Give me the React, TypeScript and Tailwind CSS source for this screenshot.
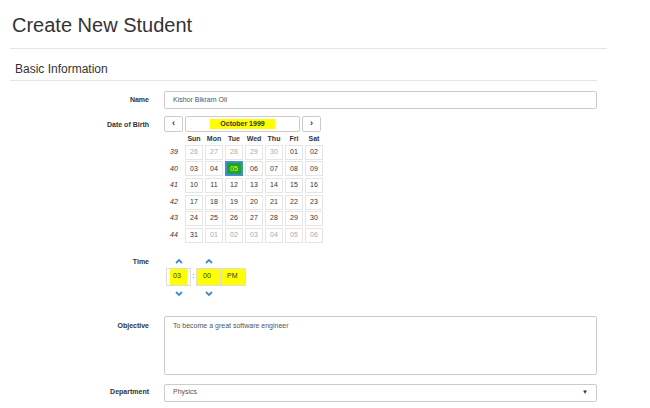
import React from "react";

const rows: [number, (string | [string, boolean])[]][] = [
  [39, ["26", "27", "28", "29", "30", "01", "02"]],
  [40, ["03", "04", "05", "06", "07", "08", "09"]],
  [41, ["10", "11", "12", "13", "14", "15", "16"]],
  [42, ["17", "18", "19", "20", "21", "22", "23"]],
  [43, ["24", "25", "26", "27", "28", "29", "30"]],
  [44, ["31", "01", "02", "03", "04", "05", "06"]],
];

function Chev({ up }: { up?: boolean }) {
  return (
    <svg width="8" height="6" viewBox="0 0 8 6">
      <path d={up ? "M1 5 L4 2 L7 5" : "M1 1 L4 4 L7 1"} stroke="#428bca" strokeWidth="1.8" fill="none" />
    </svg>
  );
}

export default function App() {
  return (
    <div className="w-[650px] h-[408px] bg-white overflow-hidden text-[#333]" style={{ fontFamily: '"Liberation Sans", Arial, sans-serif' }}>
      <div className="pl-[12px] pt-[13px] text-[20px] leading-[24px]">Create New Student</div>
      <div className="ml-[10px] w-[597px] mt-[11px] border-t border-[#e5e5e5]" />
      <div className="pl-[15px] mt-[13px] text-[12px] leading-[14px]">Basic Information</div>
      <div className="ml-[10px] w-[587px] mt-[4px] border-t border-[#e5e5e5]" />
      <div className="text-[7px]">
        <div className="flex items-center mt-[10px]">
          <div className="w-[149px] text-right font-bold">Name</div>
          <div className="ml-[15px] w-[433px] h-[18px] border border-[#ccc] rounded-[2px] flex items-center px-[8px] text-[#555]">Kishor Bikram Oli</div>
        </div>
        <div className="flex mt-[7px]">
          <div className="w-[149px] text-right font-bold pt-[4px]">Date of Birth</div>
          <div className="ml-[15px]">
            <div className="flex items-center h-[16px] gap-[2px]">
              <div className="w-[19px] h-[16px] border border-[#ccc] rounded-[2px] flex items-center justify-center font-bold text-[9px]">‹</div>
              <div className="w-[115px] h-[16px] border border-[#ccc] rounded-[2px] flex items-center justify-center">
                <span className="bg-[#ffff00] px-[10px] font-bold">October 1999</span>
              </div>
              <div className="w-[19px] h-[16px] border border-[#ccc] rounded-[2px] flex items-center justify-center font-bold text-[9px]">›</div>
            </div>
            <div className="flex mt-[2px] h-[10px] items-center">
              <div className="w-[20px]" />
              {["Sun", "Mon", "Tue", "Wed", "Thu", "Fri", "Sat"].map((d) => (
                <div key={d} className="w-[20px] text-center font-bold">{d}</div>
              ))}
            </div>
            {rows.map(([w, days], ri) => (
              <div key={w} className="flex h-[16.6px] items-center">
                <div className="w-[20px] text-center italic">{w}</div>
                {days.map((d, i) => {
                  const muted = (ri === 0 && i < 5) || (ri === 5 && i > 0);
                  const active = ri === 1 && i === 2;
                  return (
                    <div key={i} className="w-[20px] flex justify-center">
                      <div className={`w-[18px] h-[15px] flex items-center justify-center border ${active ? "bg-[#22a02a] border-[#3a8fd6] border-2 text-[#ffff00]" : "border-[#e5e5e5]"} ${muted ? "text-[#aaa]" : ""}`}>{d}</div>
                    </div>
                  );
                })}
              </div>
            ))}
          </div>
        </div>
        <div className="flex mt-[12px]">
          <div className="w-[149px] text-right font-bold pt-[1px]">Time</div>
          <div className="ml-[17px]">
            <div className="flex h-[10px] items-center">
              <div className="w-[25px] flex justify-center"><Chev up /></div>
              <div className="w-[5px]" />
              <div className="w-[25px] flex justify-center"><Chev up /></div>
            </div>
            <div className="flex items-center h-[18px] mt-[2px]">
              <div className="w-[25px] h-[18px] border border-[#ddd] flex items-center px-[3px]"><span className="bg-[#ffff00] w-full h-full flex items-center pl-[3px]">03</span></div>
              <div className="w-[5px] text-center">:</div>
              <div className="w-[25px] h-[18px] border border-[#ddd] flex items-center"><span className="bg-[#ffff00] w-full h-full flex items-center pl-[6px]">00</span></div>
              <div className="w-[25px] h-[18px] border border-[#ddd] flex items-center"><span className="bg-[#ffff00] w-full h-full flex items-center pl-[5px]">PM</span></div>
            </div>
            <div className="flex h-[10px] items-center mt-[3px]">
              <div className="w-[25px] flex justify-center"><Chev /></div>
              <div className="w-[5px]" />
              <div className="w-[25px] flex justify-center"><Chev /></div>
            </div>
          </div>
        </div>
        <div className="flex mt-[17px]">
          <div className="w-[149px] text-right font-bold pt-[5px]">Objective</div>
          <div className="ml-[15px] w-[433px] h-[59px] border border-[#ccc] rounded-[2px] px-[8px] pt-[4px] text-[#555]">To become a great software engineer</div>
        </div>
        <div className="flex items-center mt-[9px]">
          <div className="w-[149px] text-right font-bold">Department</div>
          <div className="ml-[15px] w-[433px] h-[18px] border border-[#ccc] rounded-[2px] flex items-center justify-between px-[8px] text-[#555]">
            <span>Physics</span><span className="text-[6px] text-[#333]">▼</span>
          </div>
        </div>
      </div>
    </div>
  );
}
